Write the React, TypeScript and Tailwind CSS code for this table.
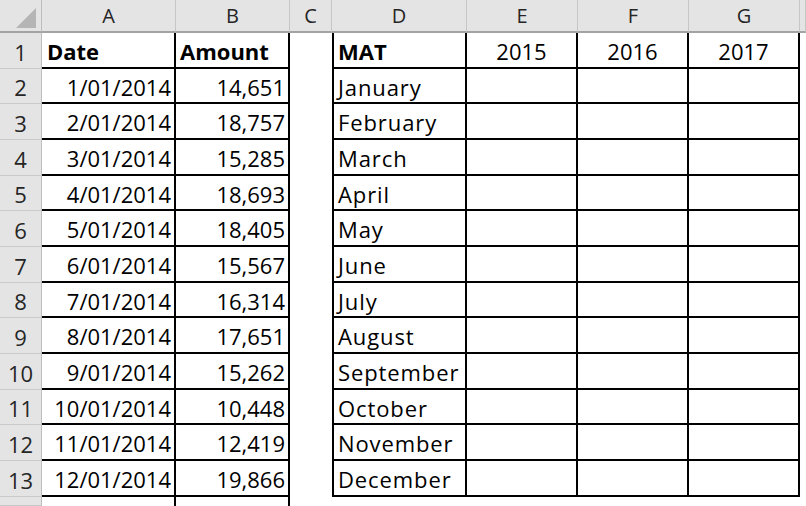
import React from "react";

const colLetters = ["A", "B", "C", "D", "E", "F", "G", ""];
const dates = [
  "1/01/2014", "2/01/2014", "3/01/2014", "4/01/2014", "5/01/2014", "6/01/2014",
  "7/01/2014", "8/01/2014", "9/01/2014", "10/01/2014", "11/01/2014", "12/01/2014",
];
const amounts = [
  "14,651", "18,757", "15,285", "18,693", "18,405", "15,567",
  "16,314", "17,651", "15,262", "10,448", "12,419", "19,866",
];
const months = [
  "January", "February", "March", "April", "May", "June", "July",
  "August", "September", "October", "November", "December",
];

const hdr = "bg-[#e4e4e4] flex items-center justify-center text-[#262626]";

export default function App() {
  const cells: React.ReactNode[] = [];

  // header row
  cells.push(
    <div key="corner" className={`${hdr} relative border-r border-r-[#bdbdbd] border-b-2 border-b-[#a3a3a3]`}>
      <svg width="24" height="22" viewBox="0 0 24 22" className="absolute left-[14px] top-[7px]">
        <polygon points="22,1 22,21 2,21" fill="#b5b5b5" />
      </svg>
    </div>
  );
  colLetters.forEach((l, i) => {
    cells.push(
      <div
        key={`h${i}`}
        className={`${hdr} text-[20px] border-r border-r-[#c6c6c6] border-b-2 border-b-[#a3a3a3] pt-[1px]`}
      >
        {l}
      </div>
    );
  });

  // data rows 1..14
  for (let r = 1; r <= 14; r++) {
    const inTable = r <= 13;
    cells.push(
      <div key={`rh${r}`} className={`${hdr} border-r border-r-[#bdbdbd] border-b border-b-[#c9c9c9] pt-[2px]`}>
        {r <= 13 ? r : ""}
      </div>
    );
    // A
    cells.push(
      <div
        key={`a${r}`}
        className={`bg-white flex items-center pt-[2px] border-r-2 border-black ${inTable ? "border-b-2" : ""} ${
          r === 1 ? "justify-start pl-[5px] font-bold" : "justify-end pr-[3px]"
        }`}
      >
        {r === 1 ? "Date" : r <= 13 ? dates[r - 2] : ""}
      </div>
    );
    // B
    cells.push(
      <div
        key={`b${r}`}
        className={`bg-white flex items-center pt-[2px] border-r-2 border-black ${inTable ? "border-b-2" : ""} ${
          r === 1 ? "justify-start pl-[4px] font-bold" : "justify-end pr-[3px]"
        }`}
      >
        {r === 1 ? "Amount" : r <= 13 ? amounts[r - 2] : ""}
      </div>
    );
    // C
    cells.push(<div key={`c${r}`} className="bg-white" />);
    // D
    cells.push(
      <div
        key={`d${r}`}
        className={`bg-white flex items-center pt-[2px] pl-[4px] whitespace-nowrap ${
          inTable ? "border-l-2 border-r-2 border-b-2 border-black" : ""
        } ${r === 1 ? "font-bold" : "tracking-[0.9px]"}`}
      >
        {r === 1 ? "MAT" : r <= 13 ? months[r - 2] : ""}
      </div>
    );
    // E F G
    ["2015", "2016", "2017"].forEach((y, i) => {
      cells.push(
        <div
          key={`y${r}${i}`}
          className={`bg-white flex items-center justify-center pt-[2px] ${
            inTable ? "border-r-2 border-b-2 border-black" : ""
          }`}
        >
          {r === 1 ? y : ""}
        </div>
      );
    });
    // H
    cells.push(<div key={`hh${r}`} className="bg-white" />);
  }

  return (
    <div
      className="w-[806px] h-[506px] overflow-hidden bg-white text-[22px] leading-none text-black grid grid-cols-[42px_134px_114px_42px_135px_111px_111px_111px_1fr] grid-rows-[33px_36px_35px_36px_36px_35px_36px_36px_35px_36px_36px_35px_36px_36px_1fr]"
      style={{ fontFamily: "'Open Sans', 'Noto Sans', sans-serif" }}
    >
      {cells}
    </div>
  );
}
